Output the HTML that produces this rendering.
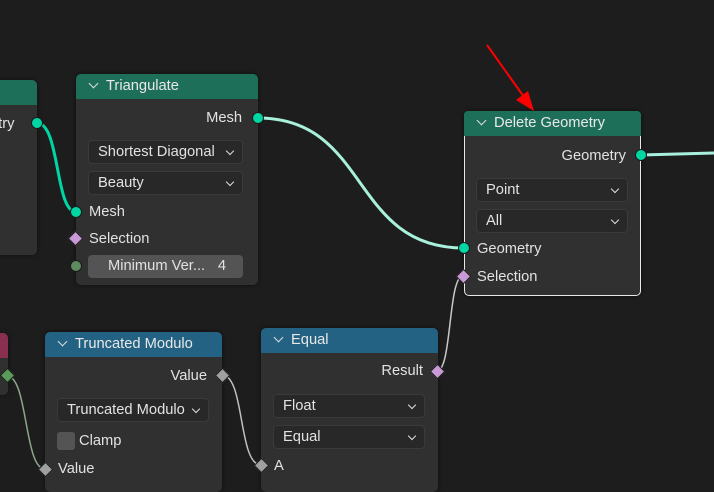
<!DOCTYPE html>
<html><head><meta charset="utf-8"><style>
*{margin:0;padding:0;box-sizing:border-box}
body{width:714px;height:482px;background:#1d1d1d;overflow:hidden;position:relative;font-family:"Liberation Sans","DejaVu Sans",sans-serif;font-size:14.7px;color:#e2e2e2}
.node{position:absolute;background:#303030;border-radius:5px;box-shadow:0 0 4px rgba(0,0,0,.5)}
.hd{position:absolute;left:0;right:0;top:0;height:25px;border-radius:5px 5px 0 0;padding-left:12px;line-height:24px;font-size:14.7px;color:#e8e8e8}
.g{background:#1e6f5a}.b{background:#246283}.p{background:#8a2f4f}
.chev{display:inline-block;width:7px;height:7px;border-right:1.5px solid #ddd;border-bottom:1.5px solid #ddd;transform:rotate(45deg);margin:0 9px 3px 2px}
.t{position:absolute;white-space:nowrap;line-height:16px}
.dd{position:absolute;background:#282828;border:1px solid #3a3a3a;border-radius:4px;padding-left:9px;line-height:22px;white-space:nowrap}
.dd:after{content:"";position:absolute;right:9px;top:7px;width:5px;height:5px;border-right:1.5px solid #ddd;border-bottom:1.5px solid #ddd;transform:rotate(45deg)}
.s{position:absolute;width:12px;height:12px;border-radius:50%;background:#00d6a3;border:1px solid #1a1a1a}
.d{position:absolute;width:11px;height:11px;transform:rotate(45deg);border:1px solid #1a1a1a}
svg{position:absolute;left:0;top:0}
</style></head><body>
<svg width="714" height="482" style="z-index:0">
<path d="M37 123 C60 123,55 212,76 212" stroke="#00d6a3" stroke-width="3" fill="none"/>
<path d="M258 118 C370 118,350 248,464 248" stroke="#a8f0dc" stroke-width="3" fill="none"/>
<path d="M641 155 L714 153" stroke="#a8f0dc" stroke-width="3" fill="none"/>
<path d="M437 371 C452 371,448 276,463 276" stroke="#c8c8c8" stroke-width="1.5" fill="none"/>
<path d="M222 375 C245 375,238 465,261 465" stroke="#c0c0c0" stroke-width="1.5" fill="none"/>
<path d="M7 376 C28 376,24 469,45 469" stroke="#8aa88a" stroke-width="1.5" fill="none"/>
</svg>
<div class="node" style="left:-10px;top:80px;width:47px;height:175px"><div class="hd g" style="border-radius:0 5px 0 0"></div><div class="t" style="left:0;top:36px">etry</div></div>
<div class="s" style="left:31px;top:117px"></div>
<div class="node" style="left:-10px;top:333px;width:18px;height:62px"><div class="hd p" style="border-radius:0 5px 0 0"></div></div>
<div class="d" style="left:2px;top:370px;background:#5a9a5a"></div>

<div class="node" style="left:76px;top:74px;width:182px;height:211px">
<div class="hd g"><span class="chev"></span>Triangulate</div>
<div class="t" style="right:16px;top:36px">Mesh</div>
<div class="dd" style="left:12px;top:66px;width:155px;height:24px">Shortest Diagonal</div>
<div class="dd" style="left:12px;top:97px;width:155px;height:24px">Beauty</div>
<div class="t" style="left:13px;top:130px">Mesh</div>
<div class="t" style="left:13px;top:157px">Selection</div>
<div style="position:absolute;left:12px;top:181px;width:155px;height:23px;background:#545454;border-radius:4px;line-height:23px;padding-left:20px">Minimum Ver...<span style="position:absolute;right:17px">4</span></div>
</div>
<div class="s" style="left:252px;top:112px"></div>
<div class="s" style="left:70px;top:206px"></div>
<div class="d" style="left:70px;top:233px;background:#c89ad6"></div>
<div class="s" style="left:70px;top:260px;background:#5f8a5f"></div>

<div class="node" style="left:464px;top:111px;width:177px;height:185px;border:1px solid #e8e8e8">
<div class="hd g" style="left:-1px;right:-1px;top:-1px;border-radius:4px 4px 0 0"><span class="chev"></span>Delete Geometry</div>
<div class="t" style="right:14px;top:36px">Geometry</div>
<div class="dd" style="left:11px;top:66px;width:152px;height:24px">Point</div>
<div class="dd" style="left:11px;top:97px;width:152px;height:24px">All</div>
<div class="t" style="left:12px;top:129px">Geometry</div>
<div class="t" style="left:12px;top:157px">Selection</div>
</div>
<div class="s" style="left:635px;top:149px"></div>
<div class="s" style="left:458px;top:242px"></div>
<div class="d" style="left:458px;top:271px;background:#c89ad6"></div>

<div class="node" style="left:45px;top:332px;width:177px;height:160px">
<div class="hd b"><span class="chev"></span>Truncated Modulo</div>
<div class="t" style="right:15px;top:36px">Value</div>
<div class="dd" style="left:12px;top:66px;width:152px;height:24px">Truncated Modulo</div>
<div style="position:absolute;left:12px;top:100px;width:18px;height:18px;background:#545454;border-radius:3px"></div>
<div class="t" style="left:34px;top:101px">Clamp</div>
<div class="t" style="left:13px;top:129px">Value</div>
</div>
<div class="d" style="left:217px;top:370px;background:#a0a0a0"></div>
<div class="d" style="left:40px;top:464px;background:#a0a0a0"></div>

<div class="node" style="left:261px;top:328px;width:177px;height:164px">
<div class="hd b"><span class="chev"></span>Equal</div>
<div class="t" style="right:15px;top:35px">Result</div>
<div class="dd" style="left:12px;top:66px;width:152px;height:24px">Float</div>
<div class="dd" style="left:12px;top:97px;width:152px;height:24px">Equal</div>
<div class="t" style="left:13px;top:130px">A</div>
</div>
<div class="d" style="left:432px;top:366px;background:#c89ad6"></div>
<div class="d" style="left:256px;top:460px;background:#a0a0a0"></div>

<svg width="714" height="482" style="z-index:5">
<line x1="487" y1="45" x2="524" y2="97" stroke="#f00" stroke-width="2"/>
<polygon points="534,111 516,100 528,91" fill="#f00"/>
</svg>
</body></html>
